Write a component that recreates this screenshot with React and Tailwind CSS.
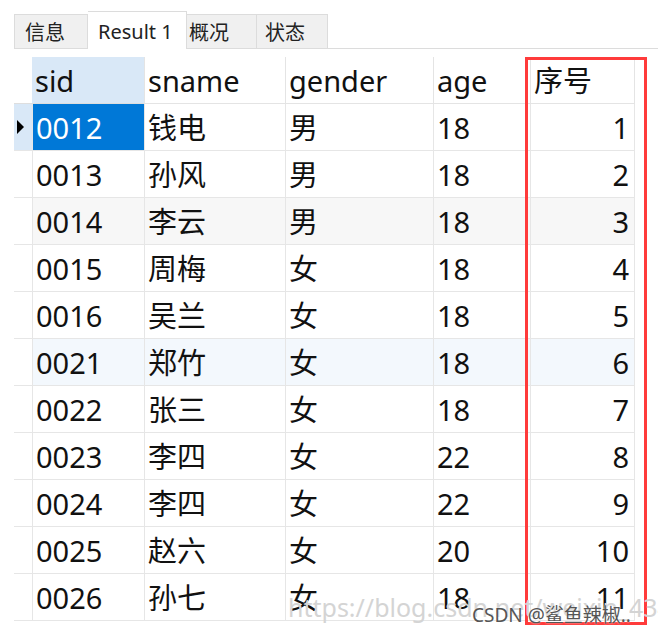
import React from 'react';

const rows = [
  ['0012', '钱电', '男', '18', '1'],
  ['0013', '孙风', '男', '18', '2'],
  ['0014', '李云', '男', '18', '3'],
  ['0015', '周梅', '女', '18', '4'],
  ['0016', '吴兰', '女', '18', '5'],
  ['0021', '郑竹', '女', '18', '6'],
  ['0022', '张三', '女', '18', '7'],
  ['0023', '李四', '女', '22', '8'],
  ['0024', '李四', '女', '22', '9'],
  ['0025', '赵六', '女', '20', '10'],
  ['0026', '孙七', '女', '18', '11'],
];

// row background tints (striping + hover row)
const rowBg = {
  2: 'bg-[#f7f7f7]',
  5: 'bg-[#f3f8fd]',
};

const font = { fontFamily: '"Noto Sans", "Noto Sans CJK SC", sans-serif' };

export default function App() {
  return (
    <div className="w-[658px] h-[636px] bg-white overflow-hidden relative" style={font}>
      {/* tab strip */}
      <div className="pt-[12px] pl-[14px]">
        <div className="flex items-end border-b border-[#dcdcdc] h-[37px]">
          <div className="w-[74px] h-[34px] flex items-center pl-[10px] pt-[2px] bg-[#f0f0f0] border border-b-0 border-[#dcdcdc] text-[20px] text-[#222]">信息</div>
          <div className="w-[99px] h-[38px] flex items-center pl-[10px] pt-[2px] bg-white border border-b-0 border-l-0 border-[#dcdcdc] text-[20px] text-[#222] -mb-px">Result 1</div>
          <div className="w-[70px] h-[34px] flex items-center pl-[2px] pt-[2px] bg-[#f0f0f0] border-t border-r border-[#dcdcdc] text-[20px] text-[#222]">概况</div>
          <div className="w-[71px] h-[34px] flex items-center pl-[8px] pt-[2px] bg-[#f0f0f0] border-t border-r border-[#dcdcdc] text-[20px] text-[#222]">状态</div>
        </div>
      </div>

      {/* result grid */}
      <div className="relative mt-[8px] ml-[14px]">
        <div className="grid grid-cols-[18px_112px_141px_148px_97px_105px] text-[29px] text-[#111] leading-none">
          {/* header */}
          <div className="h-[47px] border-b border-[#dedede]" />
          <div className="h-[47px] flex items-center pl-[3px] bg-[#d9e8f7] border-b border-[#dedede]">sid</div>
          <div className="h-[47px] flex items-center pl-[3px] border-l border-b border-[#e4e4e4]">sname</div>
          <div className="h-[47px] flex items-center pl-[3px] border-l border-b border-[#e4e4e4]">gender</div>
          <div className="h-[47px] flex items-center pl-[3px] border-l border-b border-[#e4e4e4]">age</div>
          <div className="h-[47px] flex items-center pl-[3px] border-l border-r border-b border-[#e4e4e4]">序号</div>

          {rows.map((r, i) => {
            const sel = i === 0;
            const bg = rowBg[i] || 'bg-white';
            return (
              <React.Fragment key={i}>
                <div className={`h-[47px] flex items-center border-b border-[#e6e6e6] ${sel ? 'bg-[#d9e8f7]' : 'bg-white'}`}>
                  {sel && (
                    <svg width="8" height="14" viewBox="0 0 8 14" className="ml-[3px]">
                      <polygon points="0,0 7,7 0,14" fill="#000" />
                    </svg>
                  )}
                </div>
                <div className={`h-[47px] flex items-center pl-[3px] border-l border-b border-[#e6e6e6] ${sel ? 'bg-[#0078d7] text-white' : bg}`}>
                  {r[0]}
                </div>
                <div className={`h-[47px] flex items-center pl-[3px] border-l border-b border-[#e6e6e6] ${bg}`}>{r[1]}</div>
                <div className={`h-[47px] flex items-center pl-[3px] border-l border-b border-[#e6e6e6] ${bg}`}>{r[2]}</div>
                <div className={`h-[47px] flex items-center pl-[3px] border-l border-b border-[#e6e6e6] ${bg}`}>{r[3]}</div>
                <div className={`h-[47px] flex items-center justify-end pr-[5px] border-l border-r border-b border-[#e6e6e6] ${bg}`}>{r[4]}</div>
              </React.Fragment>
            );
          })}
        </div>

        {/* red highlight box around 序号 column */}
        <div className="absolute left-[511px] top-0 w-[122px] h-[568px] border-[3px] border-[#ff3b3b] pointer-events-none" />
      </div>

      {/* watermark */}
      <div className="absolute left-[288px] top-[589px] text-[25px] text-[#d4d4d4] whitespace-nowrap">
        https://blog.csdn.net/weixin_4345031
      </div>
      <div className="absolute left-[472px] top-[601px] text-[19px] text-[#555] whitespace-nowrap [text-shadow:0_0_2px_#fff]">
        CSDN @鲨鱼辣椒..
      </div>
    </div>
  );
}
